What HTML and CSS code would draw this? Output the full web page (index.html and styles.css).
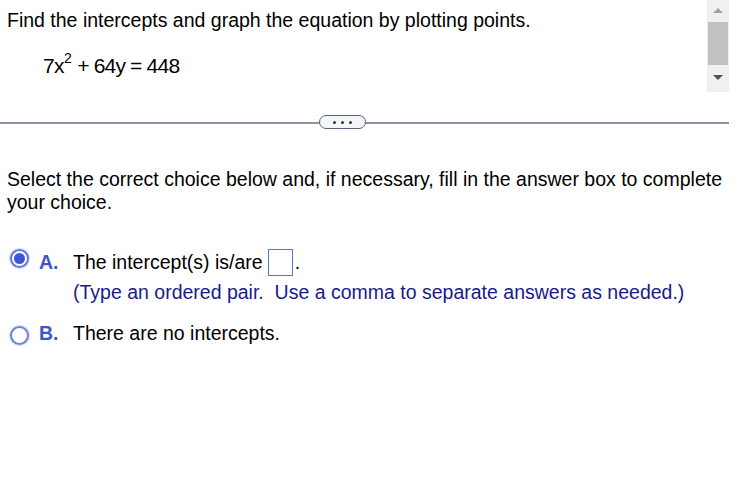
FILE: index.html
```html
<!DOCTYPE html>
<html>
<head>
<meta charset="utf-8">
<link rel="stylesheet" href="styles.css">
</head>
<body>
<div class="page">
  <div class="top">
    <div class="question">
      <p class="prompt">Find the intercepts and graph the equation by plotting points.</p>
      <p class="equation">7x<sup>2</sup> + 64y = 448</p>
    </div>
    <div class="scrollbar">
      <div class="arrow up"></div>
      <div class="thumb"></div>
      <div class="arrow down"></div>
    </div>
  </div>
  <div class="divider">
    <div class="pill"><span></span><span></span><span></span></div>
  </div>
  <p class="instructions">Select the correct choice below and, if necessary, fill in the answer box to complete your choice.</p>
  <div class="choices">
    <div class="choice first">
      <div class="radio checked"></div>
      <div class="letter">A.</div>
      <div class="body">
        <div class="line">The intercept(s) is/are <span class="box"></span>.</div>
        <div class="hint">(Type an ordered pair.&nbsp; Use a comma to separate answers as needed.)</div>
      </div>
    </div>
    <div class="choice second">
      <div class="radio"></div>
      <div class="letter">B.</div>
      <div class="body">
        <div class="line">There are no intercepts.</div>
      </div>
    </div>
  </div>
</div>
</body>
</html>
```
FILE: styles.css
```css
html, body {
  margin: 0;
  padding: 0;
  background: #fff;
}
body {
  font-family: "Liberation Sans", Arial, sans-serif;
  font-size: 19.5px;
  color: #000;
}
.page {
  width: 749px;
  height: 482px;
  overflow: hidden;
}
.top {
  display: flex;
  height: 92px;
}
.question {
  flex: 1;
  padding-left: 7px;
}
.prompt {
  margin: 0;
  padding-top: 8px;
  line-height: 24px;
}
.equation {
  margin: 0;
  padding-top: 22px;
  padding-left: 36px;
  line-height: 24px;
  font-size: 21px;
  letter-spacing: -0.8px;
}
.equation sup {
  font-size: 14px;
  line-height: 0;
  vertical-align: 10px;
  margin-left: 0.5px;
  margin-right: 1px;
}
.scrollbar {
  width: 22px;
  margin-right: 20px;
  background: #f0f0f0;
  display: flex;
  flex-direction: column;
  align-items: center;
}
.arrow {
  width: 0;
  height: 0;
  border-left: 5px solid transparent;
  border-right: 5px solid transparent;
}
.arrow.up {
  margin-top: 8px;
  border-bottom: 5px solid #a3a3a3;
}
.thumb {
  margin-top: 9px;
  width: 20px;
  height: 43px;
  background: #c1c1c1;
}
.arrow.down {
  margin-top: 10px;
  border-top: 5px solid #505050;
}
.divider {
  width: 729px;
  height: 2px;
  background: #8c93a8;
  margin-top: 30px;
  position: relative;
}
.pill {
  position: absolute;
  left: 319px;
  top: -7px;
  width: 45px;
  height: 12px;
  border: 1.5px solid #5a6478;
  border-radius: 7px;
  background: #f5f6f8;
  display: flex;
  justify-content: center;
  align-items: center;
  gap: 5px;
}
.pill span {
  width: 3px;
  height: 3px;
  border-radius: 50%;
  background: #333;
}
.instructions {
  margin: 0;
  padding: 44px 20px 0 7px;
  line-height: 23px;
}
.choices {
  padding-top: 36px;
}
.choice {
  display: flex;
  align-items: flex-start;
}
.choice.second {
  margin-top: 17px;
}
.radio {
  width: 15px;
  height: 15px;
  margin-left: 10px;
  border: 2px solid #6a84dc;
  border-radius: 50%;
  box-sizing: content-box;
  flex: none;
  position: relative;
  box-shadow: 0 0 1px 1px rgba(120, 145, 225, 0.35);
}
.choice.first .radio {
  margin-top: -1px;
}
.choice.second .radio {
  margin-top: 5px;
}
.radio.checked {
  border-color: #6078d8;
}
.radio.checked::after {
  content: "";
  position: absolute;
  left: 2px;
  top: 2px;
  width: 11px;
  height: 11px;
  border-radius: 50%;
  background: #3c55d6;
}
.letter {
  width: 34px;
  padding-left: 10px;
  font-weight: bold;
  color: #3d56c8;
  line-height: 24px;
  flex: none;
}
.body {
  line-height: 24px;
}
.line {
  display: flex;
  align-items: center;
  height: 28px;
  margin-top: -2px;
}
.box {
  display: inline-block;
  width: 23px;
  height: 25px;
  border: 1px solid #4a7bd0;
  margin-left: 5px;
  margin-right: 2px;
}
.hint {
  color: #1a1a8c;
  margin-top: 4px;
}
.choice.second .line {
  height: 24px;
  margin-top: 0;
}
```
